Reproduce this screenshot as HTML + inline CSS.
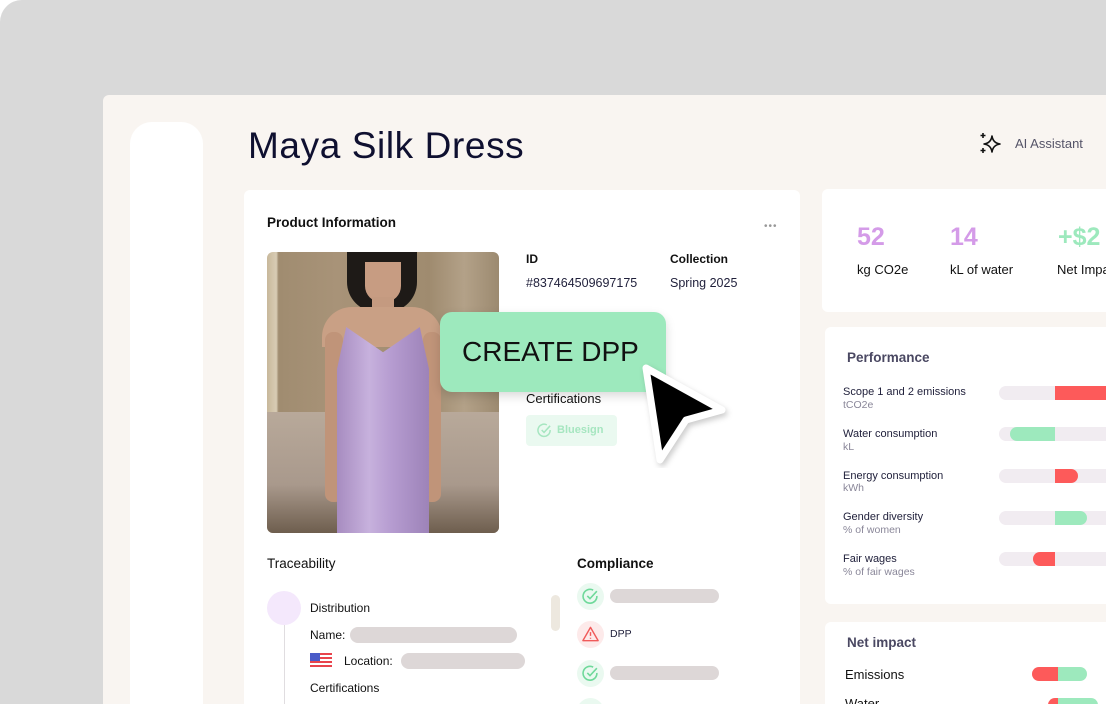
<!DOCTYPE html>
<html style="width:1106px;height:704px;overflow:hidden"><head><style>
*{margin:0;padding:0;box-sizing:border-box}
body{width:1106px;height:704px;overflow:hidden;background:#fff;font-family:"Liberation Sans",sans-serif;position:relative}
.outer{position:absolute;left:0;top:0;width:1106px;height:704px;background:#d9d9d9;border-top-left-radius:22px}
.panel{position:absolute;left:103px;top:95px;width:1003px;height:609px;background:#f9f5f1;border-top-left-radius:6px}
.side{position:absolute;left:130px;top:122px;width:73px;height:582px;background:#fff;border-radius:22px 22px 0 0}
.abs{position:absolute}
.card{position:absolute;background:#fff;border-radius:6px}
.t{position:absolute;white-space:nowrap}
.pill{position:absolute;background:#ddd7d7;border-radius:8px;height:14px}
.bar{position:absolute;left:999px;width:107px;height:14px;background:#f1ecf1;border-radius:7px 0 0 7px;overflow:hidden}
.lbl{position:absolute;left:843px;font-size:11px;color:#1f1f3a}
.sub{position:absolute;left:843px;font-size:10.5px;color:#8a8799}
</style></head><body>
<div class="outer"></div>
<div class="panel"></div>
<div class="side"></div>
<div class="abs" style="left:0;top:0;width:1106px;height:704px;overflow:hidden">
<div class="t" style="left:248px;top:125px;font-size:37px;color:#0f1030;letter-spacing:0.6px;font-weight:300">Maya Silk Dress</div>
<svg class="abs" style="left:979px;top:131px" width="24" height="24" viewBox="0 0 24 24" fill="none" stroke="#111" stroke-width="1.6" stroke-linejoin="round"><path d="M13 5 Q14 12 21 13 Q14 14 13 21 Q12 14 5 13 Q12 12 13 5Z"/><path d="M4 2v5M1.5 4.5h5M4 17v5M1.5 19.5h5"/></svg>
<div class="t" style="left:1015px;top:136px;font-size:13px;color:#555468">AI Assistant</div>

<div class="card" style="left:244px;top:190px;width:556px;height:520px"></div>
<div class="t" style="left:267px;top:215px;font-size:13.5px;font-weight:bold;color:#111">Product Information</div>
<div class="t" style="left:764px;top:221px;font-size:10px;color:#999;letter-spacing:1px">•••</div>
<div class="abs" style="left:267px;top:252px;width:232px;height:281px;border-radius:6px;overflow:hidden;background:linear-gradient(90deg,#c8b89b 0,#d8ccb4 4%,#a08c70 5%,#a89378 30%,#9f8b6f 70%,#b3a188 85%,#9c8a70 100%)">
 <div class="abs" style="left:0;top:160px;width:232px;height:121px;background:linear-gradient(180deg,#b8a99a,#a9998c 60%,#6e5e4e)"></div>
 <div class="abs" style="left:80px;top:0;width:70px;height:60px;background:#1e1a17;border-radius:0 0 30px 30px"></div>
 <div class="abs" style="left:98px;top:10px;width:36px;height:40px;background:#c79c82;border-radius:0 0 16px 16px"></div>
 <div class="abs" style="left:105px;top:45px;width:22px;height:16px;background:#c49a80"></div>
 <div class="abs" style="left:55px;top:55px;width:120px;height:40px;background:#c9a085;border-radius:30px 30px 0 0"></div>
 <div class="abs" style="left:58px;top:80px;width:18px;height:170px;background:#c09479;border-radius:8px"></div>
 <div class="abs" style="left:156px;top:80px;width:18px;height:170px;background:#c09479;border-radius:8px"></div>
 <div class="abs" style="left:70px;top:75px;width:92px;height:210px;background:linear-gradient(90deg,#a78cc0,#c7b1dd 35%,#b59bd0 60%,#9d83b8);clip-path:polygon(10% 0,50% 12%,90% 0,100% 20%,115% 100%,-15% 100%,0 20%)"></div>
</div>
<div class="t" style="left:526px;top:252px;font-size:12px;font-weight:bold;color:#111">ID</div>
<div class="t" style="left:670px;top:252px;font-size:12px;font-weight:bold;color:#111">Collection</div>
<div class="t" style="left:526px;top:276px;font-size:12.5px;color:#1f1f3a">#837464509697175</div>
<div class="t" style="left:670px;top:276px;font-size:12.5px;color:#1f1f3a">Spring 2025</div>
<div class="t" style="left:526px;top:391px;font-size:13px;color:#111">Certifications</div>
<div class="abs" style="left:526px;top:415px;width:91px;height:31px;background:#eaf9f0;border-radius:4px"></div>
<svg class="abs" style="left:537px;top:423px" width="15" height="15" viewBox="0 0 16 16" fill="none" stroke="#a6e6c0" stroke-width="1.6"><path d="M14 7.5A6.5 6.5 0 1 1 10.5 2"/><path d="M5 7.5l2.5 2.5L14 3"/></svg>
<div class="t" style="left:557px;top:424px;font-size:11px;font-weight:bold;color:#a6e6c0">Bluesign</div>
<div class="abs" style="left:440px;top:312px;width:226px;height:80px;background:#9de9bd;border-radius:12px;box-shadow:0 4px 10px rgba(0,0,0,.15)"></div>
<div class="t" style="left:462px;top:336px;font-size:28px;color:#111">CREATE DPP</div>
<svg class="abs" style="left:636px;top:358px" width="100" height="110" viewBox="0 0 100 110"><path d="M10 10 L86 52 L50 62 L24 102 Z" fill="#000" stroke="#fff" stroke-width="7" stroke-linejoin="round" style="filter:drop-shadow(2px 3px 3px rgba(0,0,0,.2))"/></svg>

<div class="t" style="left:267px;top:556px;font-size:13.5px;color:#111">Traceability</div>
<div class="abs" style="left:267px;top:591px;width:34px;height:34px;border-radius:50%;background:#f4e8fc"></div>
<div class="abs" style="left:284px;top:625px;width:1px;height:80px;background:#e0dde0"></div>
<div class="t" style="left:310px;top:601px;font-size:12px;color:#111">Distribution</div>
<div class="t" style="left:310px;top:628px;font-size:12px;color:#111">Name:</div>
<div class="pill" style="left:350px;top:627px;width:167px;height:16px"></div>
<div class="abs" style="left:310px;top:653px;width:22px;height:15px;background:repeating-linear-gradient(180deg,#e8444c 0 2px,#fff 2px 4px)"></div>
<div class="abs" style="left:310px;top:653px;width:10px;height:8px;background:#4a5bc8"></div>
<div class="t" style="left:344px;top:654px;font-size:12px;color:#111">Location:</div>
<div class="pill" style="left:401px;top:653px;width:124px;height:16px"></div>
<div class="t" style="left:310px;top:681px;font-size:12px;color:#111">Certifications</div>
<div class="abs" style="left:551px;top:595px;width:9px;height:36px;background:#ede8df;border-radius:5px"></div>
<div class="t" style="left:577px;top:556px;font-size:13.5px;font-weight:bold;color:#111">Compliance</div>
<div class="abs" style="left:577px;top:583px;width:27px;height:27px;border-radius:50%;background:#eaf9f0"></div>
<svg class="abs" style="left:582px;top:588px" width="17" height="17" viewBox="0 0 16 16" fill="none" stroke="#6fd99a" stroke-width="1.5"><path d="M14 7.5A6.5 6.5 0 1 1 10.5 2"/><path d="M5 7.5l2.5 2.5L14 3"/></svg>
<div class="pill" style="left:610px;top:589px;width:109px"></div>
<div class="abs" style="left:577px;top:621px;width:27px;height:27px;border-radius:50%;background:#fdeaea"></div>
<svg class="abs" style="left:581px;top:625px" width="19" height="18" viewBox="0 0 20 18" fill="none" stroke="#f05a5a" stroke-width="1.5" stroke-linejoin="round"><path d="M10 2L18 16H2Z"/><path d="M10 7v4M10 13v1"/></svg>
<div class="t" style="left:610px;top:628px;font-size:10.5px;color:#1f1f3a">DPP</div>
<div class="abs" style="left:577px;top:660px;width:27px;height:27px;border-radius:50%;background:#eaf9f0"></div>
<svg class="abs" style="left:582px;top:665px" width="17" height="17" viewBox="0 0 16 16" fill="none" stroke="#6fd99a" stroke-width="1.5"><path d="M14 7.5A6.5 6.5 0 1 1 10.5 2"/><path d="M5 7.5l2.5 2.5L14 3"/></svg>
<div class="pill" style="left:610px;top:666px;width:109px"></div>
<div class="abs" style="left:577px;top:698px;width:27px;height:27px;border-radius:50%;background:#eaf9f0"></div>

<div class="card" style="left:822px;top:189px;width:300px;height:123px"></div>
<div class="t" style="left:857px;top:223px;font-size:25px;font-weight:bold;color:#d49be8">52</div>
<div class="t" style="left:950px;top:223px;font-size:25px;font-weight:bold;color:#d49be8">14</div>
<div class="t" style="left:1058px;top:223px;font-size:25px;font-weight:bold;color:#9de9bd">+$2</div>
<div class="t" style="left:857px;top:262px;font-size:13px;color:#111">kg CO2e</div>
<div class="t" style="left:950px;top:262px;font-size:13px;color:#111">kL of water</div>
<div class="t" style="left:1057px;top:262px;font-size:13px;color:#111">Net Impact</div>

<div class="card" style="left:825px;top:327px;width:300px;height:277px"></div>
<div class="t" style="left:847px;top:350px;font-size:13.5px;font-weight:bold;color:#4a4862">Performance</div>
<div class="lbl" style="top:386px">Scope 1 and 2 emissions</div><div class="sub" style="top:399px">tCO2e</div>
<div class="bar" style="top:386px"><div class="abs" style="left:56px;top:0;width:60px;height:14px;background:#fd5a5a;border-radius:0 7px 7px 0"></div></div>
<div class="lbl" style="top:428px">Water consumption</div><div class="sub" style="top:441px">kL</div>
<div class="bar" style="top:427px"><div class="abs" style="left:11px;top:0;width:45px;height:14px;background:#9de9bd;border-radius:7px 0 0 7px"></div></div>
<div class="lbl" style="top:470px">Energy consumption</div><div class="sub" style="top:482px">kWh</div>
<div class="bar" style="top:469px"><div class="abs" style="left:56px;top:0;width:23px;height:14px;background:#fd5a5a;border-radius:0 7px 7px 0"></div></div>
<div class="lbl" style="top:511px">Gender diversity</div><div class="sub" style="top:524px">% of women</div>
<div class="bar" style="top:511px"><div class="abs" style="left:56px;top:0;width:32px;height:14px;background:#9de9bd;border-radius:0 7px 7px 0"></div></div>
<div class="lbl" style="top:553px">Fair wages</div><div class="sub" style="top:566px">% of fair wages</div>
<div class="bar" style="top:552px"><div class="abs" style="left:34px;top:0;width:22px;height:14px;background:#fd5a5a;border-radius:7px 0 0 7px"></div></div>

<div class="card" style="left:825px;top:622px;width:300px;height:100px"></div>
<div class="t" style="left:847px;top:635px;font-size:13.5px;font-weight:bold;color:#4a4862">Net impact</div>
<div class="t" style="left:845px;top:667px;font-size:13px;color:#111">Emissions</div>
<div class="abs" style="left:1032px;top:667px;width:26px;height:14px;background:#fd5a5a;border-radius:7px 0 0 7px"></div>
<div class="abs" style="left:1058px;top:667px;width:29px;height:14px;background:#9de9bd;border-radius:0 7px 7px 0"></div>
<div class="t" style="left:845px;top:696px;font-size:13px;color:#111">Water</div>
<div class="abs" style="left:1048px;top:698px;width:10px;height:14px;background:#fd5a5a;border-radius:7px 0 0 7px"></div>
<div class="abs" style="left:1058px;top:698px;width:40px;height:14px;background:#9de9bd;border-radius:0 7px 7px 0"></div>
</div>
</body></html>
